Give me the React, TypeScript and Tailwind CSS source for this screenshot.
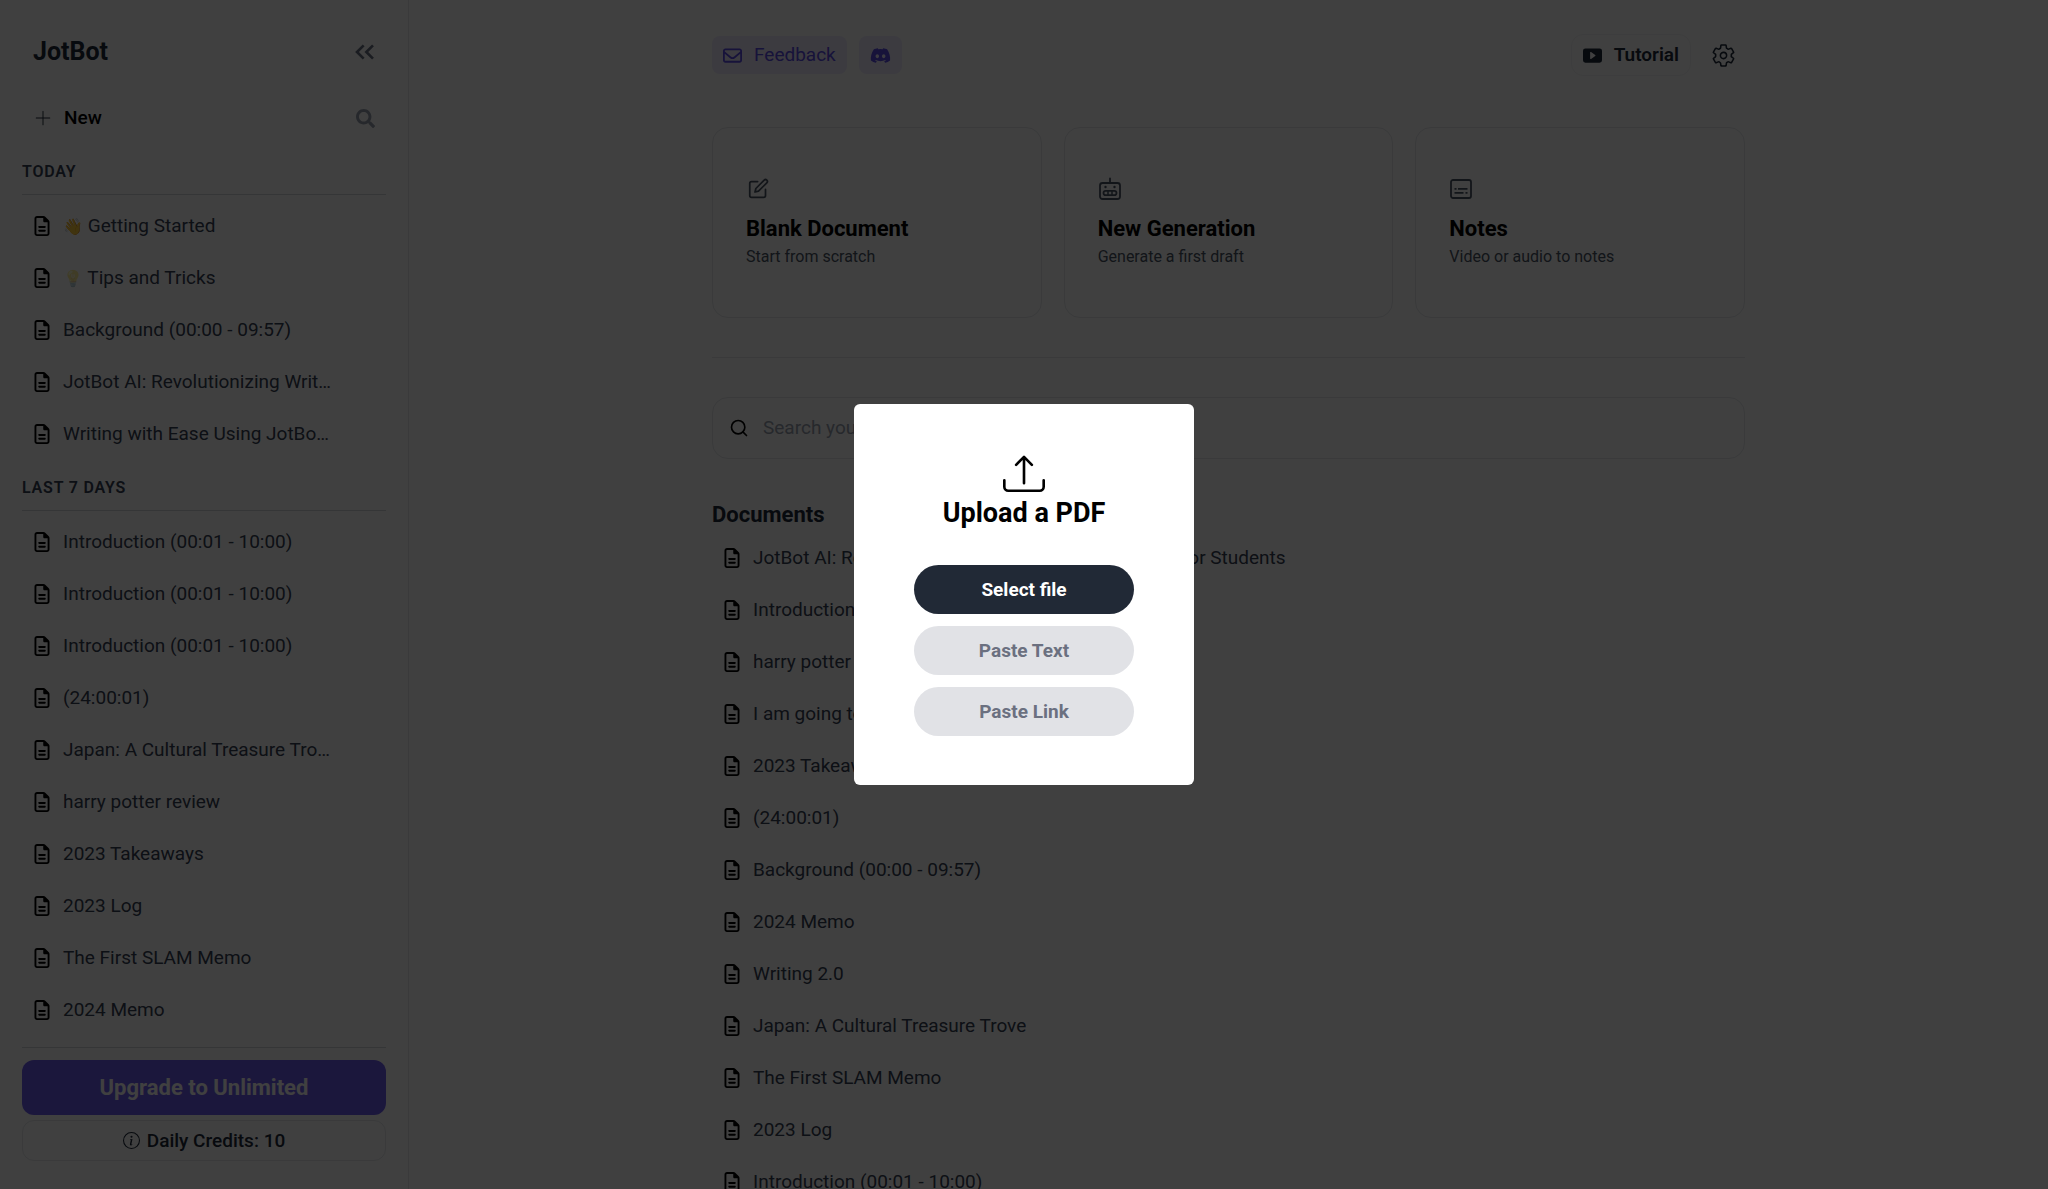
import type { ReactNode } from "react";
import { ChevronsLeft } from "lucide-react";
import { BsInfoCircle, BsPlayBtnFill, BsUpload } from "react-icons/bs";
import { FaDiscord, FaRegEnvelope, FaRegFileLines } from "react-icons/fa6";
import { FaSearch } from "react-icons/fa";
import { FiEdit, FiSearch } from "react-icons/fi";
import { IoSettingsOutline } from "react-icons/io5";
import { PiPlusLight } from "react-icons/pi";

type Doc = { title: string; emoji?: ReactNode };

const TODAY: Doc[] = [
  { title: "Getting Started", emoji: <span className="text-base opacity-90">👋</span> },
  { title: "Tips and Tricks", emoji: <span className="text-base opacity-40">💡</span> },
  { title: "Background (00:00 - 09:57)" },
  { title: "JotBot AI: Revolutionizing Writing for Students" },
  { title: "Writing with Ease Using JotBot AI" },
];

const LAST_WEEK: Doc[] = [
  { title: "Introduction (00:01 - 10:00)" },
  { title: "Introduction (00:01 - 10:00)" },
  { title: "Introduction (00:01 - 10:00)" },
  { title: "(24:00:01)" },
  { title: "Japan: A Cultural Treasure Trove" },
  { title: "harry potter review" },
  { title: "2023 Takeaways" },
  { title: "2023 Log" },
  { title: "The First SLAM Memo" },
  { title: "2024 Memo" },
];

const DOCUMENTS: Doc[] = [
  { title: "JotBot AI: Revolutionizing Writing and Note-Taking for Students" },
  { title: "Introduction (00:01 - 10:00)" },
  { title: "harry potter review" },
  { title: "I am going to the store" },
  { title: "2023 Takeaways" },
  { title: "(24:00:01)" },
  { title: "Background (00:00 - 09:57)" },
  { title: "2024 Memo" },
  { title: "Writing 2.0" },
  { title: "Japan: A Cultural Treasure Trove" },
  { title: "The First SLAM Memo" },
  { title: "2023 Log" },
  { title: "Introduction (00:01 - 10:00)" },
];

function RobotIcon() {
  return (
    <svg width="22" height="24" viewBox="0 0 22 24" fill="none" stroke="currentColor" strokeWidth="1.8" strokeLinecap="round">
      <rect x="1" y="6" width="20" height="16" rx="2.5" />
      <path d="M11 1.5V6" />
      <rect x="4.5" y="13.8" width="13" height="4.4" rx="2.2" />
      <path d="M9 14v4M13 14v4" strokeWidth="1.5" />
      <circle cx="6.5" cy="10" r="1.2" fill="currentColor" stroke="none" />
      <circle cx="15.5" cy="10" r="1.2" fill="currentColor" stroke="none" />
    </svg>
  );
}

function NotesIcon() {
  return (
    <svg width="22" height="20" viewBox="0 0 22 20" fill="none" stroke="currentColor" strokeWidth="1.8">
      <rect x="1" y="1" width="20" height="18" rx="2" />
      <path d="M4.5 9.8h2M8 9.8h9.5M4.5 13.8h9M15.5 13.8h2" />
    </svg>
  );
}

const CARDS = [
  { title: "Blank Document", text: "Start from scratch", icon: <FiEdit size={21} /> },
  { title: "New Generation", text: "Generate a first draft", icon: <RobotIcon /> },
  { title: "Notes", text: "Video or audio to notes", icon: <NotesIcon /> },
];

function DocRow({ doc }: { doc: Doc }) {
  return (
    <li>
      <a href="#" className="flex h-[52px] items-center gap-[13px] pl-3 pr-13 text-gray-700">
        <FaRegFileLines size={20} className="w-4 shrink-0 text-black" />
        <span className="truncate">
          {doc.emoji}{doc.emoji && " "}{doc.title}
        </span>
      </a>
    </li>
  );
}

function Section({ label, items }: { label: string; items: Doc[] }) {
  return (
    <section className="pt-3.5">
      <h2 className="border-b border-gray-300 pb-2 text-base leading-7 font-semibold tracking-wider text-gray-700 uppercase">
        {label}
      </h2>
      <ul className="pt-[5px]">
        {items.map((d, i) => <DocRow key={i} doc={d} />)}
      </ul>
    </section>
  );
}

function Sidebar() {
  return (
    <aside className="flex w-[409px] shrink-0 flex-col border-r border-gray-200 px-[22px]">
      <div className="flex items-center justify-between px-[11px] pt-8">
        <h1 className="text-[25px] leading-10 font-bold text-gray-800">JotBot</h1>
        <button aria-label="Collapse sidebar" className="-mr-1.5 text-gray-500">
          <ChevronsLeft size={32} strokeLinecap="butt" strokeLinejoin="miter" />
        </button>
      </div>
      <div className="flex items-center justify-between px-[11px] pt-8">
        <button className="flex items-center gap-[11px] font-medium text-black">
          <PiPlusLight size={20} className="text-gray-800" />
          New
        </button>
        <button aria-label="Search" className="text-gray-400">
          <FaSearch size={19} />
        </button>
      </div>
      <nav className="min-h-0 flex-1 overflow-hidden pt-3">
        <Section label="Today" items={TODAY} />
        <Section label="Last 7 days" items={LAST_WEEK} />
      </nav>
      <div className="flex flex-col gap-[5px] border-t border-gray-300 pt-3 pb-7">
        <button className="h-[55px] rounded-xl bg-[#6d5cf0] text-[22px] font-bold text-white">
          Upgrade to Unlimited
        </button>
        <button className="flex h-[41px] items-center justify-center gap-[7px] rounded-xl border border-gray-200 font-medium text-gray-800">
          <BsInfoCircle size={17} />
          Daily Credits: 10
        </button>
      </div>
    </aside>
  );
}

function Main() {
  return (
    <main className="flex flex-1 justify-center">
      <div className="w-full max-w-[1033px] pt-[34px]">
        <header className="flex items-center justify-between">
          <div className="flex items-center gap-3">
            <a href="#" className="flex h-[38px] items-center gap-3 rounded-lg bg-violet-100 px-[11px] text-[#5b4be8]">
              <FaRegEnvelope size={19} />
              Feedback
            </a>
            <a href="#" aria-label="Discord" className="flex h-[38px] items-center rounded-lg bg-violet-100 px-[11px] text-[#5b4be8]">
              <FaDiscord size={21} />
            </a>
          </div>
          <div className="flex items-center gap-3.5 pr-[3px]">
            <button className="flex h-[42px] items-center gap-3 rounded-xl border border-gray-100 px-[11px] font-semibold text-gray-800">
              <BsPlayBtnFill size={19} />
              Tutorial
            </button>
            <button aria-label="Settings" className="p-1.5 text-gray-800">
              <IoSettingsOutline size={25} />
            </button>
          </div>
        </header>

        <div className="mt-[51px] grid grid-cols-3 gap-[22px]">
          {CARDS.map((c) => (
            <button key={c.title}
              className="flex h-[191px] flex-col items-start justify-center rounded-2xl border border-gray-200 px-[33px] text-left">
              <span className="flex size-6 items-center justify-center text-gray-600">{c.icon}</span>
              <span className="mt-3 text-[22px] leading-8 font-bold text-black">{c.title}</span>
              <span className="text-base leading-6 text-gray-600">{c.text}</span>
            </button>
          ))}
        </div>

        <hr className="mt-[39px] border-t border-gray-200" />

        <label className="mt-[39px] flex h-[62px] items-center gap-3.5 rounded-2xl border border-gray-200 px-4">
          <FiSearch size={20} className="text-black" />
          <input type="text" placeholder="Search your documents" aria-label="Search your documents"
            className="min-w-0 flex-1 outline-none placeholder:text-gray-400" />
        </label>

        <h2 className="mt-10 text-[22px] leading-8 font-bold text-gray-800">Documents</h2>
        <ul className="pt-px">
          {DOCUMENTS.map((d, i) => <DocRow key={i} doc={d} />)}
        </ul>
      </div>
    </main>
  );
}

function ModalButton({ primary, children }: { primary?: boolean; children: ReactNode }) {
  return (
    <button className={primary
      ? "h-[49px] w-full rounded-full bg-[#212936] font-bold text-white"
      : "h-[49px] w-full rounded-full bg-[#e1e2e6] font-bold text-[#6b7080]"}>
      {children}
    </button>
  );
}

function UploadModal() {
  return (
    <div className="fixed inset-0 flex items-center justify-center bg-black/75">
      <div role="dialog" aria-labelledby="upload-title"
        className="flex w-[340px] flex-col items-center rounded-md bg-white px-[60px] py-[49px]">
        <BsUpload size={42} className="text-black" />
        <h2 id="upload-title" className="text-[27px] leading-9 font-bold text-black">Upload a PDF</h2>
        <div className="mt-[34px] flex w-full flex-col gap-3">
          <ModalButton primary>Select file</ModalButton>
          <ModalButton>Paste Text</ModalButton>
          <ModalButton>Paste Link</ModalButton>
        </div>
      </div>
    </div>
  );
}

export default function App() {
  return (
    <div className="flex h-screen overflow-hidden bg-white font-[Roboto,sans-serif] text-[19px] leading-7">
      <Sidebar />
      <Main />
      <UploadModal />
    </div>
  );
}
